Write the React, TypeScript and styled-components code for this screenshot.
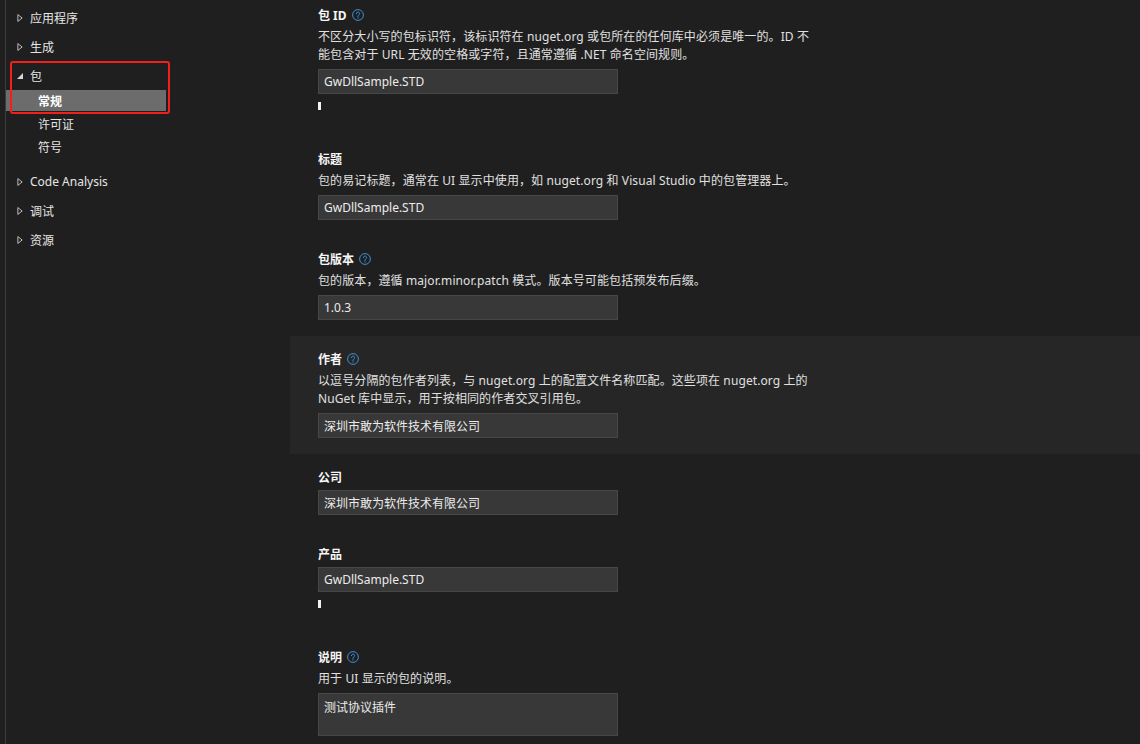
import React from "react";
import styled, { createGlobalStyle } from "styled-components";

const Global = createGlobalStyle`
  html, body { margin: 0; padding: 0; height: 744px; overflow: hidden; background: #1f1f1f; }
  body { font-family: "Noto Sans", "Noto Sans CJK SC", sans-serif; font-size: 12px; color: #dcdcdc; }
  #root { height: 744px; }
`;

const Shell = styled.div`
  display: flex;
  height: 744px;
  background: #1f1f1f;
`;

const Sidebar = styled.nav`
  width: 284px;
  margin-left: 5px;
  border-left: 1px solid #3d3d3d;
  padding-top: 3px;
  flex-shrink: 0;
`;

const TreeRow = styled.div`
  display: flex;
  align-items: center;
  height: 29px;
  padding-left: 11px;
  color: #e6e6e6;
  font-size: 12px;
  white-space: nowrap;
`;

const Toggle = styled.span`
  display: inline-flex;
  width: 6px;
  margin-right: 7px;
  align-items: center;
  justify-content: center;
`;

const Group = styled.div`
  position: relative;
  padding-bottom: 8px;
`;

const ChildRow = styled.div<{ $selected?: boolean }>`
  display: flex;
  align-items: center;
  width: 160px;
  box-sizing: border-box;
  height: 21px;
  margin-bottom: 2px;
  padding-left: 32px;
  color: ${(p) => (p.$selected ? "#ffffff" : "#e6e6e6")};
  font-weight: ${(p) => (p.$selected ? 700 : 400)};
  background: ${(p) => (p.$selected ? "#6c6c6c" : "transparent")};
  white-space: nowrap;
`;

const Annotation = styled.div`
  position: absolute;
  left: 4px;
  top: 0;
  width: 160px;
  height: 53px;
  box-sizing: border-box;
  border: 2px solid #f0201a;
  border-radius: 3px;
  pointer-events: none;
`;

const Main = styled.main`
  flex: 1;
  min-width: 0;
`;

const Scroller = styled.div`
  margin-top: -8px;
`;

const Section = styled.section<{ $active?: boolean }>`
  padding: 13px 28px 16px;
  background: ${(p) => (p.$active ? "#262626" : "transparent")};
`;

const Label = styled.div`
  display: flex;
  align-items: center;
  gap: 5px;
  height: 20px;
  margin-bottom: 3px;
  font-weight: 700;
  color: #f6f6f6;
  font-size: 12px;
`;

const Desc = styled.div`
  line-height: 18px;
  color: #e0e0e0;
  margin-bottom: 5px;
  letter-spacing: 0.1px;
`;

const Line = styled.div`
  white-space: nowrap;
`;

const Field = styled.div<{ $tall?: boolean }>`
  width: 300px;
  height: ${(p) => (p.$tall ? 43 : 25)}px;
  box-sizing: border-box;
  background: #383838;
  border: 1px solid #474747;
  padding: ${(p) => (p.$tall ? "4px 5px" : "0 5px")};
  display: flex;
  align-items: ${(p) => (p.$tall ? "flex-start" : "center")};
  color: #ececec;
  font-size: 12px;
  white-space: nowrap;
`;

const Cursor = styled.div`
  width: 3px;
  height: 8px;
  margin: 8px 0 10px;
  background: #f2f2f2;
`;

const Collapsed = () => (
  <svg width="7" height="10" viewBox="0 0 7 10">
    <path d="M1 1 L6 5 L1 9 Z" fill="none" stroke="#d6d6d6" strokeWidth="1" strokeLinejoin="miter" />
  </svg>
);

const Expanded = () => (
  <svg width="6" height="6" viewBox="0 0 6 6">
    <path d="M6 0 L6 6 L0 6 Z" fill="#d6d6d6" />
  </svg>
);

const Help = () => (
  <svg width="12" height="12" viewBox="0 0 12 12">
    <circle cx="6" cy="6" r="5.4" fill="none" stroke="#3d8fd6" strokeWidth="1" />
    <path
      d="M4.4 4.6a1.6 1.6 0 1 1 2.4 1.4c-.6.35-.8.6-.8 1.2v.4"
      fill="none"
      stroke="#3d8fd6"
      strokeWidth="1"
      strokeLinecap="round"
    />
    <circle cx="6" cy="8.9" r="0.6" fill="#3d8fd6" />
  </svg>
);

type Item = {
  label: string;
  help?: boolean;
  desc?: string[];
  value: string;
  cursor?: boolean;
  active?: boolean;
  tall?: boolean;
};

const items: Item[] = [
  {
    label: "包 ID",
    help: true,
    desc: [
      "不区分大小写的包标识符，该标识符在 nuget.org 或包所在的任何库中必须是唯一的。ID 不",
      "能包含对于 URL 无效的空格或字符，且通常遵循 .NET 命名空间规则。",
    ],
    value: "GwDllSample.STD",
    cursor: true,
  },
  {
    label: "标题",
    desc: ["包的易记标题，通常在 UI 显示中使用，如 nuget.org 和 Visual Studio 中的包管理器上。"],
    value: "GwDllSample.STD",
  },
  {
    label: "包版本",
    help: true,
    desc: ["包的版本，遵循 major.minor.patch 模式。版本号可能包括预发布后缀。"],
    value: "1.0.3",
  },
  {
    label: "作者",
    help: true,
    desc: [
      "以逗号分隔的包作者列表，与 nuget.org 上的配置文件名称匹配。这些项在 nuget.org 上的",
      "NuGet 库中显示，用于按相同的作者交叉引用包。",
    ],
    value: "深圳市敢为软件技术有限公司",
    active: true,
  },
  { label: "公司", value: "深圳市敢为软件技术有限公司" },
  { label: "产品", value: "GwDllSample.STD", cursor: true },
  {
    label: "说明",
    help: true,
    desc: ["用于 UI 显示的包的说明。"],
    value: "测试协议插件",
    tall: true,
  },
];

export default function App() {
  return (
    <>
      <Global />
      <Shell>
        <Sidebar>
          <TreeRow>
            <Toggle><Collapsed /></Toggle>应用程序
          </TreeRow>
          <TreeRow>
            <Toggle><Collapsed /></Toggle>生成
          </TreeRow>
          <Group>
            <TreeRow>
              <Toggle><Expanded /></Toggle>包
            </TreeRow>
            <ChildRow $selected>常规</ChildRow>
            <ChildRow>许可证</ChildRow>
            <ChildRow>符号</ChildRow>
            <Annotation />
          </Group>
          <TreeRow>
            <Toggle><Collapsed /></Toggle>Code Analysis
          </TreeRow>
          <TreeRow>
            <Toggle><Collapsed /></Toggle>调试
          </TreeRow>
          <TreeRow>
            <Toggle><Collapsed /></Toggle>资源
          </TreeRow>
        </Sidebar>
        <Main>
          <Scroller>
            {items.map((it) => (
              <Section key={it.label} $active={it.active}>
                <Label>
                  {it.label}
                  {it.help && <Help />}
                </Label>
                {it.desc && (
                  <Desc>
                    {it.desc.map((l) => (
                      <Line key={l}>{l}</Line>
                    ))}
                  </Desc>
                )}
                <Field $tall={it.tall}>{it.value}</Field>
                {it.cursor && <Cursor />}
              </Section>
            ))}
          </Scroller>
        </Main>
      </Shell>
    </>
  );
}
